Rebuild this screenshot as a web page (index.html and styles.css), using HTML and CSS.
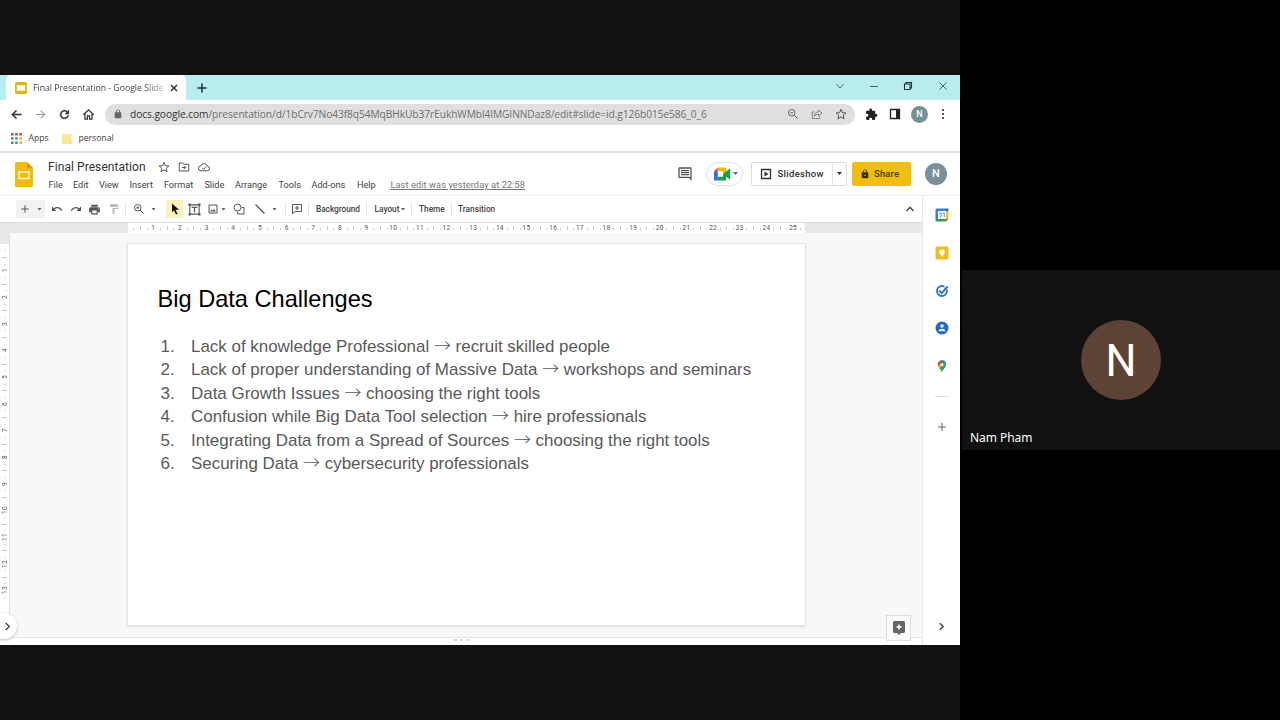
FILE: index.html
```html
<!DOCTYPE html>
<html lang="en">
<head>
    <meta charset="UTF-8">
    <meta name="viewport" content="width=device-width, initial-scale=1.0">
    <title>Final Presentation - Google Slides</title>
    <link rel="stylesheet" href="styles.css">
</head>
<body>
    <div class="meeting">
        <div class="share">
            <div class="browser">
                <div class="tabstrip">
                    <div class="tab">
                        <svg class="favicon" viewBox="0 0 12 12"><rect width="12" height="12" rx="1.5" fill="#e3b51c"/><rect x="1.8" y="3.2" width="8.4" height="5.6" fill="#fffbe8"/></svg>
                        <span class="tab-title">Final Presentation - Google Slide</span>
                        <svg class="tab-close" viewBox="0 0 8 8"><path d="M1 1l6 6M7 1L1 7" stroke="#222" stroke-width="1.3"/></svg>
                    </div>
                    <svg class="new-tab" viewBox="0 0 10 10"><path d="M5 .5v9M.5 5h9" stroke="#1c2a2a" stroke-width="1.5"/></svg>
                    <div class="window-buttons">
                        <svg viewBox="0 0 10 10"><path d="M1.5 3L5 7l3.500-4" fill="none" stroke="#4b6465"/></svg>
                        <svg viewBox="0 0 10 10"><path d="M1 5.500h8" stroke="#4b6465"/></svg>
                        <svg viewBox="0 0 10 10"><path d="M1.500 3h5.500v5.500h-5.500zM3 3V1.500h5.500V7H7" fill="none" stroke="#1f3334" stroke-width="1.100"/></svg>
                        <svg viewBox="0 0 10 10"><path d="M1.500 1.500l7 7M8.500 1.500l-7 7" stroke="#4b6465"/></svg>
                    </div>
                </div>

                <div class="navbar">
                    <div class="nav-buttons">
                        <svg viewBox="0 0 24 24"><path fill="#333" stroke="#333" d="M21 11H6.800l5.600-5.600L11 4l-8 8 8 8 1.400-1.400L6.800 13H21z"/></svg>
                        <svg viewBox="0 0 24 24"><path fill="#999" d="M3 11h14.200l-5.600-5.600L13 4l8 8-8 8-1.400-1.400 5.600-5.600H3z"/></svg>
                        <svg viewBox="0 0 24 24"><path fill="#333" stroke="#333" d="M17.650 6.350A8 8 0 1 0 19.730 14h-2.080A6 6 0 1 1 12 6c1.660 0 3.140.69 4.220 1.780L13 11h7V4z"/></svg>
                        <svg viewBox="0 0 24 24"><path fill="none" stroke="#333" stroke-width="2.300" d="M2.500 12.500L12 3.500l9.500 9M5.500 11v9.500h4.500v-6h4v6h4.500V11"/></svg>
                    </div>
                    <div class="omnibox">
                        <svg class="lock" viewBox="0 0 24 24"><path fill="#666" d="M18 8h-1V6A5 5 0 0 0 7 6v2H6a2 2 0 0 0-2 2v10c0 1.100.9 2 2 2h12a2 2 0 0 0 2-2V10a2 2 0 0 0-2-2zM9 6a3 3 0 0 1 6 0v2H9z"/></svg>
                        <span class="url"><b>docs.google.com</b>/presentation/d/1bCrv7No43f8q54MqBHkUb37rEukhWMbl4IMGINNDaz8/edit#slide=id.g126b015e586_0_6</span>
                        <svg viewBox="0 0 24 24"><g fill="none" stroke="#666" stroke-width="2"><circle cx="9.500" cy="9.500" r="6.500"/><path d="M14.500 14.500l7 7M6.500 9.500h6"/></g></svg>
                        <svg viewBox="0 0 24 24"><g fill="none" stroke="#777" stroke-width="1.800"><path d="M7 8H2.500v13h15v-4"/><path d="M15 4l7 6-7 6v-3.500c-4 0-6.500 1-8.500 4 .7-5 3.500-8.300 8.500-9z"/></g></svg>
                        <svg viewBox="0 0 24 24"><path fill="none" stroke="#555" stroke-width="2" d="M12 2.800l2.800 6.500 7 .6-5.300 4.700 1.600 6.900-6.100-3.700-6.100 3.700 1.600-6.900L2.200 9.900l7-.6z"/></svg>
                    </div>
                    <svg class="ext" viewBox="0 0 24 24"><path fill="#222" d="M20.500 11H19V7a2 2 0 0 0-2-2h-4V3.500a2.500 2.500 0 0 0-5 0V5H4a2 2 0 0 0-2 2v3.800h1.500a2.700 2.700 0 0 1 0 5.400H2V20c0 1.100.9 2 2 2h3.800v-1.500a2.700 2.700 0 0 1 5.400 0V22H17a2 2 0 0 0 2-2v-4h1.500a2.500 2.500 0 0 0 0-5z"/></svg>
                    <svg class="panel" viewBox="0 0 12 12"><path d="M1.500 1.500h9v9h-9z" fill="none" stroke="#222" stroke-width="1.300"/><path d="M7 1h4v10H7z" fill="#222"/></svg>
                    <span class="avatar avatar-small">N</span>
                    <svg class="dots" viewBox="0 0 4 12"><circle cx="2" cy="2" r="1.100"/><circle cx="2" cy="6" r="1.100"/><circle cx="2" cy="10" r="1.100"/></svg>
                </div>

                <div class="bookmarks">
                    <svg class="apps-icon" viewBox="0 0 11 11"><g fill="#c3443c"><path d="M0 0h2.500v2.500H0zM4.200 0h2.500v2.500H4.200zM8.400 0h2.500v2.500H8.400z"/></g><path fill="#3f9a5b" d="M0 4.200h2.500v2.500H0z"/><path fill="#4a82d0" d="M4.200 4.200h2.500v2.500H4.200z"/><path fill="#e2ab33" d="M8.400 4.200h2.500v2.500H8.400z"/><path fill="#3f9a5b" d="M0 8.400h2.500v2.500H0zM4.200 8.400h2.500v2.500H4.200z"/><path fill="#e2ab33" d="M8.400 8.400h2.500v2.500H8.400z"/></svg>
                    <span class="apps-label">Apps</span>
                    <svg class="folder-icon" viewBox="0 0 10 11"><path d="M0 1h9.500v10H0z" fill="#fae793"/><path d="M7.500 8h2v3h-2z" fill="#f4dc76"/></svg>
                    <span>personal</span>
                </div>

                <div class="docs-header">
                    <svg class="slides-logo" viewBox="0 0 18 25"><path fill="#f0bd0e" d="M1.500 0H12l6 6v17.500a1.500 1.500 0 0 1-1.500 1.500h-15A1.500 1.500 0 0 1 0 23.500v-22A1.500 1.500 0 0 1 1.500 0z"/><path fill="#d99a0b" d="M12 0l6 6h-6z"/><path fill="none" stroke="#fff6cf" stroke-width="1.500" d="M4 10h10v6.500H4z"/></svg>
                    <div class="doc-info">
                        <div class="doc-title">
                            <span class="doc-name">Final Presentation</span>
                            <svg viewBox="0 0 24 24"><path fill="none" stroke="#555" stroke-width="2" d="M12 2.800l2.800 6.500 7 .6-5.300 4.700 1.600 6.900-6.100-3.700-6.100 3.700 1.600-6.900L2.200 9.900l7-.6z"/></svg>
                            <svg viewBox="0 0 24 24"><path fill="none" stroke="#555" stroke-width="2" d="M2.500 4h7l2 2.500h10V20h-19zM8 13h7M12 9.500l3.500 3.500-3.500 3.500"/></svg>
                            <svg viewBox="0 0 24 24"><path fill="none" stroke="#555" stroke-width="2" d="M18.500 10.500a6.700 6.700 0 0 0-12.800-1A5 5 0 0 0 6 19.500h12.500a4.500 4.500 0 0 0 0-9zM8 13.500l3 3 5-5"/></svg>
                        </div>
                        <div class="menubar">
                            <span>File</span>
                            <span>Edit</span>
                            <span>View</span>
                            <span>Insert</span>
                            <span>Format</span>
                            <span>Slide</span>
                            <span>Arrange</span>
                            <span>Tools</span>
                            <span>Add-ons</span>
                            <span>Help</span>
                            <span class="last-edit">Last edit was yesterday at 22:58</span>
                        </div>
                    </div>
                    <div class="header-actions">
                        <svg class="comments" viewBox="0 0 24 24"><path fill="#555" d="M22 4a2 2 0 0 0-2-2H4a2 2 0 0 0-2 2v12c0 1.100.9 2 2 2h14l4 4zm-2 13.200l-1.200-1.200H4V4h16zM6 12h12v2H6zm0-3h12v2H6zm0-3h12v2H6z"/></svg>
                        <div class="meet">
                            <svg viewBox="0 0 18 14"><path fill="#2a70dc" d="M0 4h4v6H0z"/><path fill="#dd4236" d="M0 4l4-4v4z"/><path fill="#f0b90e" d="M4 0h7.500a1.500 1.500 0 0 1 1.500 1.500V5L9.500 7V4H4z"/><path fill="#1f9d4b" d="M4 10h5.500V7l3.500 2v3.500a1.500 1.500 0 0 1-1.500 1.500H4zM9.500 7L16 1.800c.6-.5 1.200-.2 1.200.5v9.400c0 .7-.6 1-1.200.5z"/><path fill="#2a70dc" d="M0 10h4v4H1.500A1.500 1.500 0 0 1 0 12.500z"/></svg>
                            <i class="caret blue"></i>
                        </div>
                        <div class="slideshow">
                            <svg viewBox="0 0 12 12"><path fill="none" stroke="#333" stroke-width="1.300" d="M1.500 1.500h9v9h-9z"/><path fill="#333" d="M4.500 3.500v5l4-2.500z"/></svg>
                            <span>Slideshow</span>
                            <div class="slideshow-more"><i class="caret dark"></i></div>
                        </div>
                        <div class="share-button">
                            <svg viewBox="0 0 24 24"><path fill="#3a2d00" d="M18 8h-1V6A5 5 0 0 0 7 6v2H6a2 2 0 0 0-2 2v10c0 1.100.9 2 2 2h12a2 2 0 0 0 2-2V10a2 2 0 0 0-2-2zM9 6a3 3 0 0 1 6 0v2H9zm3 11a2 2 0 1 1 0-4 2 2 0 0 1 0 4z"/></svg>
                            <span>Share</span>
                        </div>
                        <span class="avatar">N</span>
                    </div>
                </div>

                <div class="workspace">
                    <div class="editor">
                        <div class="toolbar">
                            <div class="new-slide"><svg viewBox="0 0 24 24"><path d="M19.500 13H13v6.500h-2V13H4.500v-2H11V4.500h2V11h6.500z"/></svg><i class="caret"></i></div>
                            <div class="tool undo"><svg viewBox="0 0 24 24"><path d="M12.500 8c-2.650 0-5.050 1-6.900 2.600L2 7v9h9l-3.620-3.620A8 8 0 0 1 20.130 16l2.370-.78A10.500 10.500 0 0 0 12.500 8z"/></svg></div>
                            <div class="tool"><svg viewBox="0 0 24 24"><path d="M18.400 10.600A10.500 10.500 0 0 0 1.500 15.220L3.900 16a8 8 0 0 1 12.700-3.620L13 16h9V7z"/></svg></div>
                            <div class="tool"><svg class="print" viewBox="0 0 24 24"><path d="M19 8H5a3 3 0 0 0-3 3v6h4v4h12v-4h4v-6a3 3 0 0 0-3-3zm-3 11H8v-5h8zm3-7a1 1 0 1 1 0-2 1 1 0 0 1 0 2zM18 3H6v4h12z"/></svg></div>
                            <div class="tool faded"><svg viewBox="0 0 24 24"><path d="M18 4V3a1 1 0 0 0-1-1H5a1 1 0 0 0-1 1v4a1 1 0 0 0 1 1h12a1 1 0 0 0 1-1V6h1v4H9v11a1 1 0 0 0 1 1h2a1 1 0 0 0 1-1v-9h8V4z"/></svg></div>
                            <i class="sep zoom-sep"></i>
                            <div class="tool w20"><svg viewBox="0 0 24 24"><g fill="none" stroke="#555" stroke-width="2"><circle cx="9.500" cy="9.500" r="6.500"/><path d="M14.500 14.500l6.500 6.500M6.500 9.500h6M9.500 6.500v6"/></g></svg></div>
                            <i class="caret zoom-caret"></i>
                            <div class="tool select"><svg viewBox="0 0 24 24"><path fill="#111" d="M6 1l14 12.500h-7l4 8-3 1.500-4-8.500-4 4z"/></svg></div>
                            <div class="tool w22"><svg class="textbox" viewBox="0 0 14 14"><path fill="none" stroke="#555" stroke-width="1.200" d="M2 2h10v10H2z"/><path d="M.5.5h2.500V3H.5zM11 .5h2.500V3H11zM.5 11h2.500v2.500H.5zM11 11h2.500v2.500H11zM4 4h6v1.500H7.700V10H6.300V5.500H4z"/></svg></div>
                            <div class="tool w16"><svg viewBox="0 0 24 24"><path d="M19 5v14H5V5zm0-2H5a2 2 0 0 0-2 2v14c0 1.100.9 2 2 2h14a2 2 0 0 0 2-2V5a2 2 0 0 0-2-2zM14.140 11.860l-3 3.870L9 13.140 6 17h12z"/></svg></div>
                            <i class="caret"></i>
                            <div class="tool w22 shape"><svg viewBox="0 0 24 24"><g fill="none" stroke="#555" stroke-width="2"><circle cx="9" cy="9" r="7"/><path d="M17.500 9H22v13H9v-4.500"/></g></svg></div>
                            <div class="tool w20"><svg viewBox="0 0 24 24"><path d="M3 3l18 18" stroke="#555" stroke-width="2.600"/></svg></div>
                            <i class="caret line-caret"></i>
                            <i class="sep"></i>
                            <div class="tool w22"><svg viewBox="0 0 24 24"><path fill="none" stroke="#555" stroke-width="2" d="M3 3h18v14H8l-5 4.500zM12 6v8M8 10h8"/></svg></div>
                            <i class="sep"></i>
                            <span class="tool-text background">Background</span>
                            <i class="sep"></i>
                            <span class="tool-text layout">Layout <i class="caret"></i></span>
                            <i class="sep"></i>
                            <span class="tool-text theme">Theme</span>
                            <i class="sep"></i>
                            <span class="tool-text transition">Transition</span>
                            <svg class="collapse" viewBox="0 0 10 10"><path d="M1.500 7L5 3.200 8.500 7" fill="none" stroke="#444" stroke-width="1.400"/></svg>
                        </div>
                        <div class="ruler-h" id="rulerH"></div>
                        <div class="canvas-row">
                            <div class="ruler-v" id="rulerV"></div>
                            <div class="canvas">
                                <div class="slide">
                                    <h1>Big Data Challenges</h1>
                                    <ol>
                                        <li><span>1.</span>Lack of knowledge Professional <i>→</i> recruit skilled people</li>
                                        <li><span>2.</span>Lack of proper understanding of Massive Data <i>→</i> workshops and seminars</li>
                                        <li><span>3.</span>Data Growth Issues <i>→</i> choosing the right tools</li>
                                        <li><span>4.</span>Confusion while Big Data Tool selection <i>→</i> hire professionals</li>
                                        <li><span>5.</span>Integrating Data from a Spread of Sources <i>→</i> choosing the right tools</li>
                                        <li><span>6.</span>Securing Data <i>→</i> cybersecurity professionals</li>
                                    </ol>
                                </div>
                            </div>
                        </div>
                        <div class="notes-bar"><i></i><i></i><i></i></div>
                        <div class="filmstrip-toggle"><svg viewBox="0 0 10 10"><path d="M3 1l4 4-4 4" fill="none" stroke="#444" stroke-width="1.500"/></svg></div>
                        <div class="explore"><svg viewBox="0 0 12 14"><path fill="#666" d="M1.500 0h9A1.500 1.500 0 0 1 12 1.500v9a1.500 1.500 0 0 1-1.500 1.500H8l-2 2-2-2H1.500A1.500 1.500 0 0 1 0 10.500v-9A1.500 1.500 0 0 1 1.500 0z"/><path fill="#fff" d="M6 2.500L7 5l2.500 1L7 7 6 9.500 5 7 2.500 6 5 5z"/></svg></div>
                    </div>

                    <div class="side-panel">
                        <svg viewBox="0 0 14 14"><path fill="#3f7fd6" d="M1.500.5h9.500V3H3v8H.5V1.500z"/><path fill="#2a63b8" d="M11 .5h1.500a1 1 0 0 1 1 1V3H11z"/><path fill="#ebbd26" d="M11 3h2.500v8H11z"/><path fill="#3a9d52" d="M.5 11H11v2.500H1.500a1 1 0 0 1-1-1z"/><path fill="#d8503c" d="M11 11h2.500L11 13.500z"/><path fill="#f5faff" d="M3 3h8v8H3z"/><path d="M4.500 5h2L5.500 6.700q1.500.3.800 1.600-.8.900-1.800.1M8 5.500L9.300 5v4" fill="none" stroke="#3f7fd6" stroke-width=".8"/></svg>
                        <svg viewBox="0 0 14 14"><rect x=".5" y=".5" width="13" height="13" rx="1.500" fill="#ebbd20"/><circle cx="7" cy="6" r="2.800" fill="#fffbe5"/><path fill="#fffbe5" d="M5.700 8h2.600v2.500H5.700z"/></svg>
                        <svg viewBox="0 0 14 14"><path d="M11.700 5.500A5 5 0 1 1 9.500 2.700" fill="none" stroke="#2e76cc" stroke-width="1.800"/><path d="M4 6.500l2.700 2.600L12.500 2.500" fill="none" stroke="#2e76cc" stroke-width="2"/></svg>
                        <svg viewBox="0 0 14 14"><circle cx="7" cy="7" r="6.500" fill="#2469bd"/><circle cx="7" cy="5" r="1.800" fill="#e4eefb"/><path fill="#e4eefb" d="M3.500 10.300Q3.700 7.800 7 7.800t3.500 2.500z"/></svg>
                        <svg viewBox="0 0 14 14"><path fill="#36a552" d="M2.800 5.500A4.200 4.200 0 0 1 11.200 5.500C11.200 8.500 8 9.500 7 13.500 6 9.500 2.800 8.500 2.800 5.500z"/><path fill="#3d7cd4" d="M7 1.300a4.200 4.200 0 0 1 3.600 2L7.500 6.500 5 2.500z"/><path fill="#d84b3a" d="M3.800 2.800L5.500 1.500 7 5 3 7q-.8-2.500.8-4.200z"/><path fill="#e9b72a" d="M3 7l2.500-2 1.300 2-2.500 2.300z"/><circle cx="7" cy="5.500" r="1.500" fill="#fff"/></svg>
                        <hr>
                        <svg class="addon" viewBox="0 0 10 10"><path d="M5 1v8M1 5h8" stroke="#666" stroke-width="1.100"/></svg>
                        <svg class="hide-panel" viewBox="0 0 10 10"><path d="M3.500 2l3 3-3 3" fill="none" stroke="#444" stroke-width="1.300"/></svg>
                    </div>
                </div>
            </div>
        </div>

        <div class="participants">
            <div class="tile">
                <span class="tile-avatar">N</span>
                <span class="tile-name">Nam Pham</span>
            </div>
        </div>
    </div>

    <script>
        function buildRuler(id, count) {
            const ruler = document.getElementById(id);
            for (let i = 0; i <= count; i++) {
                const mark = document.createElement("span");
                mark.className = i === 0 ? "mark first" : "mark";
                if (i > 0) {
                    const label = document.createElement("b");
                    label.innerText = i;
                    mark.appendChild(label);
                }
                ruler.appendChild(mark);
            }
        }

        buildRuler("rulerH", 25);
        buildRuler("rulerV", 13);
    </script>
</body>
</html>
```
FILE: styles.css
```css
* {
    box-sizing: border-box;
}

body {
    margin: 0;
    background-color: #000;
    font-family: Roboto, "Liberation Sans", sans-serif;
    color: #333;
}

svg {
    display: block;
    flex: none;
}

.meeting {
    display: flex;
    width: 1280px;
    height: 720px;
    overflow: hidden;
}

.share {
    width: 960px;
    padding: 75px 0;
    background-color: #111;
}

.browser {
    display: flex;
    flex-direction: column;
    height: 570px;
    background-color: #fff;
}

/* browser chrome */
.tabstrip {
    display: flex;
    align-items: center;
    height: 25px;
    padding-left: 6px;
    background-color: #b9eded;
}

.tab {
    display: flex;
    align-items: center;
    width: 180px;
    height: 25px;
    padding-left: 9px;
    background-color: #fff;
    border-radius: 5px 5px 0 0;
    font-family: "Open Sans", sans-serif;
    font-size: 8.7px;
}

.favicon {
    width: 12px;
    height: 12px;
}

.tab-title {
    width: 131px;
    margin-left: 6px;
    white-space: nowrap;
    color: #444;
    -webkit-mask-image: linear-gradient(to right, #000 112px, rgba(0, 0, 0, 0.3) 131px);
    mask-image: linear-gradient(to right, #000 112px, rgba(0, 0, 0, 0.3) 131px);
}

.tab-close {
    width: 8px;
    height: 8px;
    margin-left: 6px;
}

.new-tab {
    width: 10px;
    height: 10px;
    margin-left: 11px;
}

.window-buttons {
    display: flex;
    gap: 24.3px;
    margin: -4px 12.5px 0 auto;
}

.window-buttons svg {
    width: 10px;
    height: 10px;
}

.navbar {
    display: flex;
    align-items: center;
    height: 28px;
}

.nav-buttons {
    display: flex;
    gap: 11px;
    width: 105px;
    padding-left: 10px;
}

.nav-buttons svg {
    width: 13px;
    height: 13px;
}

.omnibox {
    display: flex;
    align-items: center;
    gap: 12px;
    width: 750px;
    height: 21px;
    padding: 0 8px;
    background-color: #dfdfdf;
    border-radius: 11px;
    font-family: "Open Sans", sans-serif;
    font-size: 10.2px;
    letter-spacing: -0.073px;
    color: #6f6f6f;
}

.omnibox svg {
    width: 12px;
    height: 12px;
}

.omnibox .lock {
    width: 10px;
    height: 10px;
}

.url {
    flex: 1;
    margin-left: -5px;
    white-space: nowrap;
}

.url b {
    font-weight: normal;
    color: #333;
}

.ext {
    width: 13px;
    height: 13px;
    margin-left: 10px;
}

.panel {
    width: 12px;
    height: 12px;
    margin-left: 11px;
}

.avatar {
    display: flex;
    align-items: center;
    justify-content: center;
    width: 22px;
    height: 22px;
    border-radius: 50%;
    background-color: #78909a;
    color: #fff;
    font-size: 11px;
    font-weight: 500;
}

.avatar-small {
    width: 17px;
    height: 17px;
    margin-left: 10px;
    font-size: 9px;
}

.dots {
    width: 4px;
    height: 12px;
    margin-left: 13px;
    fill: #333;
}

.bookmarks {
    display: flex;
    align-items: center;
    height: 25px;
    padding: 0 0 3px 11px;
    border-bottom: 2px solid #e2e2e2;
    font-family: "Open Sans", sans-serif;
    font-size: 8.6px;
    color: #444;
}

.apps-icon {
    width: 11px;
    height: 11px;
}

.apps-label {
    width: 33px;
    margin-left: 6.5px;
}

.folder-icon {
    width: 10px;
    height: 11px;
    margin-right: 7px;
}

/* docs header */
.docs-header {
    display: flex;
    height: 43px;
    border-bottom: 1px solid #eee;
}

.slides-logo {
    width: 18px;
    height: 25px;
    margin: 9px 14px 0 15px;
}

.doc-info {
    padding-top: 5px;
}

.doc-title {
    display: flex;
    align-items: center;
    height: 18px;
}

.doc-name {
    width: 110px;
    margin-left: 1px;
    font-size: 12px;
    letter-spacing: 0.07px;
    line-height: 16px;
    color: #333;
    white-space: nowrap;
}

.doc-title svg {
    width: 12px;
    height: 12px;
    margin-right: 8px;
}

.menubar {
    display: grid;
    grid-template-columns: 24.5px 26px 30.5px 34.5px 40.5px 30.5px 43.5px 33px 45.5px 33.5px auto;
    padding: 3px 0 0 1.4px;
    font-size: 9.2px;
    line-height: 12px;
    white-space: nowrap;
    color: #444;
}

.last-edit {
    letter-spacing: 0.11px;
    color: #777;
    text-decoration: underline;
}

.header-actions {
    display: flex;
    align-items: center;
    height: 41px;
    margin-left: auto;
    padding-right: 13px;
}

.comments {
    width: 16px;
    height: 16px;
    margin-right: 13.5px;
}

.meet {
    display: flex;
    align-items: center;
    gap: 2px;
    width: 37px;
    height: 24px;
    margin-right: 8px;
    padding-left: 7px;
    border: 1px solid #e3e3e3;
    border-radius: 12px;
}

.meet svg {
    width: 17px;
    height: 14px;
}

.caret {
    display: inline-block;
    flex: none;
    width: 5px;
    height: 3px;
    background-color: #666;
    clip-path: polygon(0 0, 100% 0, 50% 100%);
}

.caret.blue {
    background-color: #2a70c8;
}

.caret.dark {
    background-color: #333;
}

.slideshow {
    display: flex;
    align-items: center;
    width: 96px;
    height: 24px;
    padding-left: 7.5px;
    border: 1px solid #dcdcdc;
    border-radius: 2px;
    font-size: 9.5px;
    font-weight: 500;
    letter-spacing: 0.3px;
}

.slideshow svg {
    width: 12px;
    height: 12px;
    margin-right: 6px;
}

.slideshow-more {
    display: flex;
    align-items: center;
    justify-content: center;
    width: 14px;
    height: 22px;
    margin-left: auto;
    border-left: 1px solid #e3e3e3;
}

.share-button {
    display: flex;
    align-items: center;
    width: 59px;
    height: 24px;
    margin: 0 14px 0 5px;
    padding-left: 8px;
    background-color: #f0bf0d;
    border-radius: 2px;
    color: #4a3c0c;
    font-size: 9.5px;
    font-weight: 500;
    letter-spacing: 0.15px;
}

.share-button svg {
    width: 10px;
    height: 10px;
    margin-right: 4px;
}

/* editor */
.workspace {
    display: flex;
    flex: 1;
    min-height: 0;
}

.editor {
    position: relative;
    display: flex;
    flex-direction: column;
    width: 922px;
}

.toolbar {
    display: flex;
    align-items: center;
    height: 27px;
    padding-left: 16px;
    border-bottom: 1px solid #dcdcdc;
}

.toolbar svg {
    fill: #555;
}

.new-slide {
    display: flex;
    align-items: center;
    gap: 6px;
    width: 29px;
    height: 18px;
    padding-left: 3px;
    background-color: #f1f3f3;
}

.new-slide svg,
.tool svg {
    width: 12px;
    height: 12px;
}

.tool {
    display: flex;
    align-items: center;
    justify-content: center;
    width: 19px;
}

.undo {
    margin-left: 2px;
}

.w20 {
    width: 20px;
}

.w22 {
    width: 22px;
}

.w16 {
    width: 16px;
}

.tool .print,
.tool .textbox {
    width: 13px;
    height: 13px;
}

.faded {
    opacity: 0.4;
}

.shape {
    margin-left: 2px;
}

.sep {
    width: 1px;
    height: 14px;
    background-color: #e6e6e6;
}

.zoom-sep {
    margin: 0 3px 0 2px;
}

.zoom-caret {
    margin-left: 2px;
}

.select {
    width: 17px;
    height: 18px;
    margin-left: 10px;
    background-color: #fbf2b9;
}

.line-caret {
    margin: 0 8px 0 2px;
}

.tool-text {
    font-size: 8.3px;
    white-space: nowrap;
    color: #444;
    font-weight: 500;
}

.background {
    width: 57px;
    padding-left: 7px;
    letter-spacing: -0.05px;
}

.layout {
    display: flex;
    align-items: center;
    gap: 1px;
    width: 44px;
    padding-left: 7.5px;
}

.theme {
    width: 39px;
    padding-left: 7px;
}

.transition {
    padding-left: 6px;
}

.collapse {
    width: 10px;
    height: 10px;
    margin: 0 7px 0 auto;
}

.ruler-h {
    display: flex;
    height: 10px;
    padding-left: 128px;
    background: linear-gradient(#fff, #fff) 128px 0 / 677px 10px no-repeat, #e6e8ea;
    overflow: hidden;
}

/* one mark is one centimetre, centred on its number */
.mark {
    display: flex;
    flex: none;
    align-items: center;
    justify-content: center;
    width: 26.67px;
    height: 10px;
    background:
        linear-gradient(#ccc, #ccc) 0 3px / 1px 4px no-repeat,
        linear-gradient(#ccc, #ccc) 6.6px 5px / 1px 2px no-repeat,
        linear-gradient(#ccc, #ccc) 20px 5px / 1px 2px no-repeat;
}

.mark b {
    font-size: 6.5px;
    font-weight: normal;
    line-height: 10px;
    letter-spacing: 0.3px;
    color: #555;
}

.mark.first {
    width: 12px;
    background: linear-gradient(#ccc, #ccc) 5px 5px / 1px 2px no-repeat;
}

.canvas-row {
    display: flex;
    height: 404px;
}

.ruler-v {
    width: 10px;
    padding-top: 11px;
    background: linear-gradient(#e6e8ea, #e6e8ea) 0 0 / 9px 11px no-repeat, #fff;
    border-right: 1px solid #dfe2e2;
    overflow: hidden;
}

.ruler-v .mark {
    width: 9px;
    height: 26.67px;
    background:
        linear-gradient(#ccc, #ccc) 2px 0 / 5px 1px no-repeat,
        linear-gradient(#ddd, #ddd) 4px 6.6px / 2px 1px no-repeat,
        linear-gradient(#ddd, #ddd) 4px 20px / 2px 1px no-repeat;
}

.ruler-v .mark b {
    writing-mode: vertical-rl;
    transform: rotate(180deg);
}

.ruler-v .mark.first {
    height: 13px;
    background: linear-gradient(#ddd, #ddd) 4px 6px / 2px 1px no-repeat;
}

.canvas {
    width: 912px;
    padding: 10px 0 0 117px;
    background-color: #f7f9f9;
}

.slide {
    width: 679px;
    height: 383px;
    padding: 42px 0 0 31px;
    background-color: #fff;
    border: 1px solid #e2e4e4;
    box-shadow: 0 1px 2px #ddd;
    font-family: "Liberation Sans", Arial, sans-serif;
}

.slide h1 {
    margin: 0 0 22px -1.5px;
    font-size: 23.6px;
    font-weight: normal;
    line-height: 27px;
    color: #000;
}

.slide ol {
    margin: 0;
    padding: 0;
    list-style: none;
    font-size: 16.94px;
    line-height: 23.4px;
    color: #595959;
}

.slide li {
    height: 23.4px;
    white-space: nowrap;
}

.slide li span {
    display: inline-block;
    width: 32px;
    padding-left: 1.5px;
}

/* thin long arrow */
.slide li i {
    display: inline-block;
    width: 16.94px;
    height: 12px;
    line-height: 12px;
    font-family: "Noto Sans CJK JP", sans-serif;
    font-style: normal;
    font-weight: 300;
}

.notes-bar {
    display: flex;
    justify-content: center;
    gap: 3px;
    flex: 1;
    padding-top: 1px;
    border-top: 1px solid #e6e8e8;
    background-color: #fdfefe;
}

.notes-bar i {
    width: 3px;
    height: 2px;
    background-color: #d5d5d5;
}

.filmstrip-toggle {
    position: absolute;
    left: -9px;
    bottom: 6px;
    display: flex;
    align-items: center;
    justify-content: flex-end;
    width: 26px;
    height: 26px;
    padding-right: 5px;
    border-radius: 50%;
    background-color: #fff;
    box-shadow: 0 1px 3px #bbb;
}

.filmstrip-toggle svg {
    width: 9px;
    height: 9px;
}

.explore {
    position: absolute;
    right: 11px;
    bottom: 4px;
    display: flex;
    align-items: center;
    justify-content: center;
    width: 25px;
    height: 26px;
    background-color: #fafafa;
    border: 1px solid #ddd;
}

.explore svg {
    width: 12px;
    height: 14px;
}

.side-panel {
    display: flex;
    flex-direction: column;
    align-items: center;
    width: 38px;
    padding-top: 12px;
    border-left: 1px solid #e8e8e8;
}

.side-panel svg {
    width: 14px;
    height: 14px;
    margin-bottom: 23.8px;
}

.side-panel hr {
    width: 14px;
    height: 1px;
    margin: -1px 0 25px;
    border: none;
    background-color: #ddd;
}

.side-panel .addon {
    width: 10px;
    height: 10px;
    margin: 0;
}

.side-panel .hide-panel {
    width: 11px;
    height: 11px;
    margin: auto 0 13px;
}

/* meeting participants */
.participants {
    width: 320px;
    padding: 270px 0 0 2px;
}

.tile {
    position: relative;
    display: flex;
    align-items: center;
    justify-content: center;
    height: 180px;
    background-color: #111;
    font-family: "Noto Sans", sans-serif;
    color: #fff;
}

.tile-avatar {
    display: flex;
    align-items: center;
    justify-content: center;
    width: 80px;
    height: 80px;
    padding-top: 4px;
    border-radius: 50%;
    background-color: #5d4336;
    font-family: Roboto, sans-serif;
    font-size: 43.5px;
    line-height: 76px;
}

.tile-name {
    position: absolute;
    left: 8px;
    bottom: 4px;
    font-size: 12px;
    letter-spacing: -0.05px;
    line-height: 17px;
}
```
